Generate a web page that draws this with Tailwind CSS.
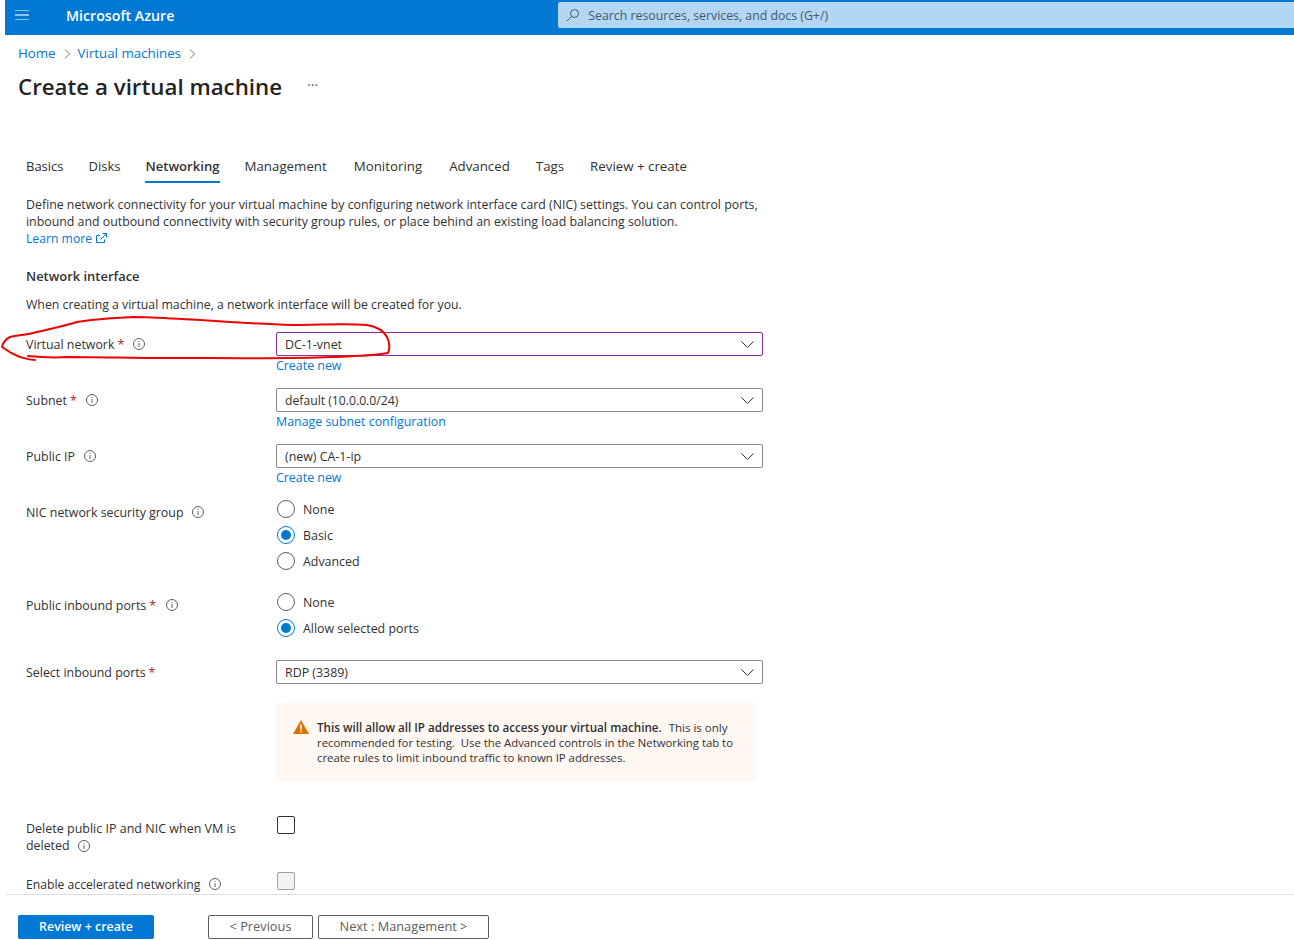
<!DOCTYPE html>
<html lang="en">
<head>
  <meta charset="UTF-8">
  <title>Create a virtual machine - Microsoft Azure</title>
  <script src="https://cdn.jsdelivr.net/npm/@tailwindcss/browser@4"></script>
</head>
<body class="relative h-[940px] overflow-hidden bg-white font-['Open_Sans',sans-serif] text-[12.4px] leading-[17px] text-[#323130]">

  <!-- top bar -->
  <header class="ml-[5px] flex h-[35px] bg-[#0078d4]">
    <button class="ml-[10px] mb-[5px] flex w-[14px] flex-col justify-center gap-[3px]">
      <span class="h-[1.5px] w-[14px] bg-[#8fc4ee]"></span>
      <span class="h-[1.5px] w-[14px] bg-[#8fc4ee]"></span>
      <span class="h-[1.5px] w-[14px] bg-[#8fc4ee]"></span>
    </button>
    <div class="ml-[37px] mb-[5px] flex items-center text-[14.2px] font-semibold text-white">Microsoft Azure</div>
    <div class="ml-[384px] mt-[2px] flex h-[26px] flex-1 items-center rounded-l-[2px] bg-[#b3d6f2] pl-[8px] text-[12.3px] text-[#44596c]">
      <svg class="h-[14px] w-[14px]" viewBox="0 0 14 14" fill="none" stroke="#44596c" stroke-width="1"><circle cx="8.500" cy="5.500" r="4"/><path d="M5.500 8.500 1 13"/></svg>
      <span class="ml-[8px]">Search resources, services, and docs (G+/)</span>
    </div>
  </header>

  <!-- breadcrumb and title -->
  <nav class="ml-[18px] mt-[10px] flex h-[17px] items-center text-[13.3px] text-[#0078d4]">
    <a>Home</a>
    <svg class="mx-[7px] h-[10px] w-[8px]" viewBox="0 0 8 10" fill="none" stroke="#777" stroke-width="1"><path d="m2 0.500 4.500 4.500-4.500 4.500"/></svg>
    <a>Virtual machines</a>
    <svg class="mx-[7px] h-[10px] w-[8px]" viewBox="0 0 8 10" fill="none" stroke="#777" stroke-width="1"><path d="m2 0.500 4.500 4.500-4.500 4.500"/></svg>
  </nav>
  <div class="ml-[18px] mt-[8px] flex h-[32px] items-center">
    <h1 class="text-[22.3px] font-semibold text-[#252423]">Create a virtual machine</h1>
    <span class="mb-[3px] ml-[25px] text-[14px] leading-none text-[#605e5c]">···</span>
  </div>

  <main class="ml-[26px] h-[0px]">
    <!-- tabs -->
    <div class="mt-[56px] flex h-[25px] text-[13.3px]">
      <span class="text-[13px]">Basics</span>
      <span class="ml-[25px] text-[13px]">Disks</span>
      <span class="ml-[25px] h-[25px] border-b-2 border-[#0078d4] text-[13.1px] font-semibold">Networking</span>
      <span class="ml-[25px]">Management</span>
      <span class="ml-[27px]">Monitoring</span>
      <span class="ml-[27px]">Advanced</span>
      <span class="ml-[26px]">Tags</span>
      <span class="ml-[26px]">Review + create</span>
    </div>

    <p class="mt-[13px] w-[745px] text-[12.35px]">Define network connectivity for your virtual machine by configuring network interface card (NIC) settings. You can control ports, inbound and outbound connectivity with security group rules, or place behind an existing load balancing solution.</p>
    <a class="flex items-center gap-[4px] text-[12.2px] text-[#0078d4]">Learn more
      <svg class="h-[11px] w-[11px]" viewBox="0 0 11 11" fill="none" stroke="#0078d4" stroke-width="1"><path d="M8.500 6.500v3h-8v-7h3.500M6.500 0.500h4v4M10.500 0.500 4.500 6.500"/></svg>
    </a>

    <h2 class="mt-[21px] text-[12.95px] font-semibold">Network interface</h2>
    <p class="mt-[11px] text-[12.3px]">When creating a virtual machine, a network interface will be created for you.</p>

    <!-- form -->
    <div class="mt-[19px] grid grid-cols-[250px_487px]">
      <div class="flex h-[24px] items-center">Virtual network <span class="ml-[3px] text-[#a4262c]">*</span><svg class="ml-[9px] h-[12px] w-[12px]" viewBox="0 0 12 12" fill="none" stroke="#605e5c"><circle cx="6" cy="6" r="5.500"/><path d="M6 5v4M6 3v1"/></svg></div>
      <div>
        <div class="flex h-[24px] items-center justify-between rounded-[2px] border border-[#8a2da5] pl-[8px] pr-[8px]">DC-1-vnet<svg class="h-[7px] w-[13px]" viewBox="0 0 13 7" fill="none" stroke="#323130"><path d="m0.500 0.500 6 6 6-6"/></svg></div>
        <a class="block h-[20px] pt-[1px] text-[#0078d4]">Create new</a>
      </div>

      <div class="mt-[12px] flex h-[24px] items-center">Subnet <span class="ml-[3px] text-[#a4262c]">*</span><svg class="ml-[9px] h-[12px] w-[12px]" viewBox="0 0 12 12" fill="none" stroke="#605e5c"><circle cx="6" cy="6" r="5.500"/><path d="M6 5v4M6 3v1"/></svg></div>
      <div class="mt-[12px]">
        <div class="flex h-[24px] items-center justify-between rounded-[2px] border border-[#8a8886] pl-[8px] pr-[8px]"><span class="text-[12.2px]">default (10.0.0.0/24)</span><svg class="h-[7px] w-[13px]" viewBox="0 0 13 7" fill="none" stroke="#323130"><path d="m0.500 0.500 6 6 6-6"/></svg></div>
        <a class="block h-[20px] pt-[1px] text-[#0078d4]">Manage subnet configuration</a>
      </div>

      <div class="mt-[12px] flex h-[24px] items-center">Public IP<svg class="ml-[9px] h-[12px] w-[12px]" viewBox="0 0 12 12" fill="none" stroke="#605e5c"><circle cx="6" cy="6" r="5.500"/><path d="M6 5v4M6 3v1"/></svg></div>
      <div class="mt-[12px]">
        <div class="flex h-[24px] items-center justify-between rounded-[2px] border border-[#8a8886] pl-[8px] pr-[8px]">(new) CA-1-ip<svg class="h-[7px] w-[13px]" viewBox="0 0 13 7" fill="none" stroke="#323130"><path d="m0.500 0.500 6 6 6-6"/></svg></div>
        <a class="block h-[20px] pt-[1px] text-[#0078d4]">Create new</a>
      </div>

      <div class="mt-[12px] flex h-[24px] items-center">NIC network security group<svg class="ml-[8px] h-[12px] w-[12px]" viewBox="0 0 12 12" fill="none" stroke="#605e5c"><circle cx="6" cy="6" r="5.500"/><path d="M6 5v4M6 3v1"/></svg></div>
      <div class="mt-[12px] flex flex-col gap-[8px] pl-[1px]">
        <label class="flex h-[18px] items-center gap-[8px]"><span class="h-[18px] w-[18px] rounded-full border border-[#605e5c]"></span>None</label>
        <label class="flex h-[18px] items-center gap-[8px]"><span class="flex h-[18px] w-[18px] items-center justify-center rounded-full border border-[#0078d4]"><span class="h-[10px] w-[10px] rounded-full bg-[#0078d4]"></span></span>Basic</label>
        <label class="flex h-[18px] items-center gap-[8px]"><span class="h-[18px] w-[18px] rounded-full border border-[#605e5c]"></span>Advanced</label>
      </div>

      <div class="mt-[23px] flex h-[24px] items-center">Public inbound ports <span class="ml-[3px] text-[#a4262c]">*</span><svg class="ml-[10px] h-[12px] w-[12px]" viewBox="0 0 12 12" fill="none" stroke="#605e5c"><circle cx="6" cy="6" r="5.500"/><path d="M6 5v4M6 3v1"/></svg></div>
      <div class="mt-[23px] flex flex-col gap-[8px] pl-[1px]">
        <label class="flex h-[18px] items-center gap-[8px]"><span class="h-[18px] w-[18px] rounded-full border border-[#605e5c]"></span>None</label>
        <label class="flex h-[18px] items-center gap-[8px]"><span class="flex h-[18px] w-[18px] items-center justify-center rounded-full border border-[#0078d4]"><span class="h-[10px] w-[10px] rounded-full bg-[#0078d4]"></span></span>Allow selected ports</label>
      </div>

      <div class="mt-[23px] flex h-[24px] items-center">Select inbound ports <span class="ml-[3px] text-[#a4262c]">*</span></div>
      <div class="mt-[23px]">
        <div class="flex h-[24px] items-center justify-between rounded-[2px] border border-[#8a8886] pl-[8px] pr-[8px]">RDP (3389)<svg class="h-[7px] w-[13px]" viewBox="0 0 13 7" fill="none" stroke="#323130"><path d="m0.500 0.500 6 6 6-6"/></svg></div>
      </div>

      <div></div>
      <div class="mt-[19px] flex h-[79px] w-[480px] rounded-[2px] bg-[#fff7f2] pl-[17px] pt-[17px] text-[11.35px] leading-[15px]">
        <svg class="h-[14px] w-[16px] shrink-0" viewBox="0 0 16 14"><path d="M8 0 16 14H0Z" fill="#e07000"/><path d="M7.200 4.500h1.600v5H7.200zM7.200 10.500h1.600v1.700H7.200z" fill="#fff"/></svg>
        <div class="ml-[8px] w-[430px]">
          <p class="flex gap-[7px]"><b class="text-[11.65px] font-semibold">This will allow all IP addresses to access your virtual machine.</b><span class="text-[11.5px]">This is only</span></p>
          <p>recommended for testing.&nbsp; Use the Advanced controls in the Networking tab to</p>
          <p>create rules to limit inbound traffic to known IP addresses.</p>
        </div>
      </div>

      <div class="mt-[38px] w-[225px]"><span class="text-[12.5px]">Delete public IP and NIC when VM is</span><br><span class="inline-flex items-center">deleted<svg class="ml-[8px] h-[12px] w-[12px]" viewBox="0 0 12 12" fill="none" stroke="#605e5c"><circle cx="6" cy="6" r="5.500"/><path d="M6 5v4M6 3v1"/></svg></span></div>
      <div class="mt-[34px]"><span class="ml-[1px] block h-[18px] w-[18px] rounded-[2px] border border-[#323130]"></span></div>

      <div class="mt-[18px] flex h-[24px] items-center self-start text-[12.2px]">Enable accelerated networking<svg class="ml-[9px] h-[12px] w-[12px]" viewBox="0 0 12 12" fill="none" stroke="#605e5c"><circle cx="6" cy="6" r="5.500"/><path d="M6 5v4M6 3v1"/></svg></div>
      <div class="mt-[18px]"><span class="ml-[1px] block h-[18px] w-[18px] rounded-[2px] border border-[#a19f9d] bg-[#f3f2f1]"></span></div>
    </div>
  </main>

  <!-- footer -->
  <footer class="absolute bottom-0 left-[5px] right-0 flex h-[46px] items-start border-t border-[#e1dfdd] bg-white pl-[13px] pt-[20px]">
    <button class="h-[24px] w-[136px] rounded-[2px] bg-[#0078d4] pb-[2px] text-[12.4px] font-semibold text-white">Review + create</button>
    <button class="ml-[54px] h-[24px] w-[105px] rounded-[2px] border border-[#605e5c] pb-[2px] text-[12.8px] text-[#605e5c]">&lt; Previous</button>
    <button class="ml-[5px] h-[24px] w-[171px] rounded-[2px] border border-[#605e5c] pb-[2px] text-[12.8px] text-[#605e5c]">Next : Management &gt;</button>
  </footer>

  <!-- red marker annotation -->
  <svg class="pointer-events-none absolute left-0 top-0" width="420" height="380" viewBox="0 0 420 380" fill="none" stroke="#f00000" stroke-width="2" stroke-linecap="round" stroke-linejoin="round">
    <path d="M35 360C28 360 24 358 20 357C12 354 6 350 2 347C3 342 6 339 10 337C18 335 26 335 33 333C50 329 64 326 77 322C95 319 113 318 133 317C155 317 178 319 200 320C230 322 262 324 293 325C320 325 345 323 367 325C378 327 384 331 387 337C390 343 390 348 388 353C372 356 352 356 333 357C278 359 222 358 167 358C134 358 100 357 67 357C52 358 38 357 28 356"/>
  </svg>
</body>
</html>
